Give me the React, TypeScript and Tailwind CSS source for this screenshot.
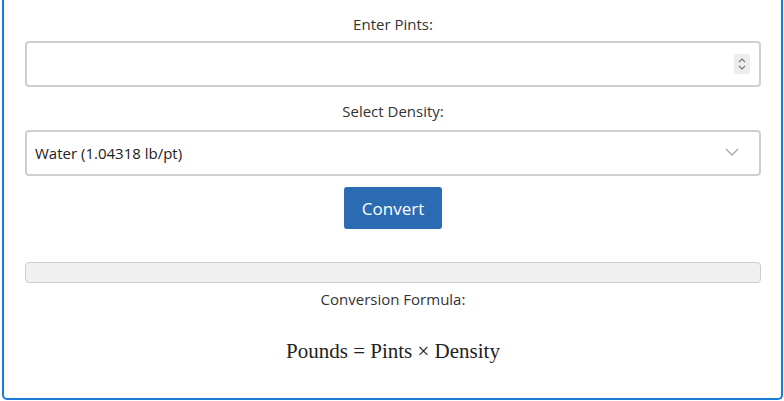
import { useState } from "react";

export default function App() {
  const [pints, setPints] = useState("");
  const [density, setDensity] = useState("1.04318");

  return (
    <div className="min-h-[401px] bg-white font-['Open_Sans',sans-serif] text-[#333]">
      <div className="ml-[2px] mr-[1px] h-[400px] rounded-b-[5px] border-x-2 border-b-2 border-[#1b7bd5] pl-[21px] pr-[20px] pt-[11px]">
        <label className="block text-center text-[15px] leading-[26px]">Enter Pints:</label>
        <div className="relative mt-[4px] h-[46px] rounded-[4px] border-2 border-[#cfcfcf]">
          <input
            type="text"
            value={pints}
            onChange={(e) => setPints(e.target.value)}
            className="h-full w-full bg-transparent px-[8px] text-[15px] outline-none"
          />
          <div className="absolute right-[9px] top-[11px] flex h-[20px] w-[16px] flex-col items-center justify-center rounded-[2px] bg-[#ececec]">
            <svg width="8" height="14" viewBox="0 0 8 14" fill="none" stroke="#777" strokeWidth="1.1">
              <path d="M1 5 L4 2 L7 5" />
              <path d="M1 9 L4 12 L7 9" />
            </svg>
          </div>
        </div>

        <label className="mt-[11px] block text-center text-[15px] leading-[26px]">Select Density:</label>
        <div className="relative mt-[6px] h-[46px] rounded-[4px] border-2 border-[#cfcfcf]">
          <select
            value={density}
            onChange={(e) => setDensity(e.target.value)}
            className="h-full w-full appearance-none bg-transparent pl-[8px] text-[15px] text-[#222] outline-none"
          >
            <option value="1.04318">Water (1.04318 lb/pt)</option>
            <option value="1.0">Milk (1.0 lb/pt)</option>
          </select>
          <svg
            className="pointer-events-none absolute right-[20px] top-[16px]"
            width="14" height="9" viewBox="0 0 14 9" fill="none" stroke="#a8a8a8" strokeWidth="1.3"
          >
            <path d="M1 1 L7 7 L13 1" />
          </svg>
        </div>

        <div className="mt-[11px] flex justify-center">
          <button
            type="button"
            className="h-[42px] w-[98px] rounded-[3px] bg-[#2b6bb1] pt-[2px] text-[17px] text-white"
          >
            Convert
          </button>
        </div>

        <div className="mt-[33px] h-[21px] rounded-[4px] border border-[#cccccc] bg-[#f0f0f0]" />

        <div className="mt-[4px] text-center text-[15px] leading-[24px]">Conversion Formula:</div>

        <div className="mt-[25px] text-center font-['Liberation_Serif',serif] text-[21px] leading-[30px] text-[#222]">
          Pounds = Pints × Density
        </div>
      </div>
    </div>
  );
}
